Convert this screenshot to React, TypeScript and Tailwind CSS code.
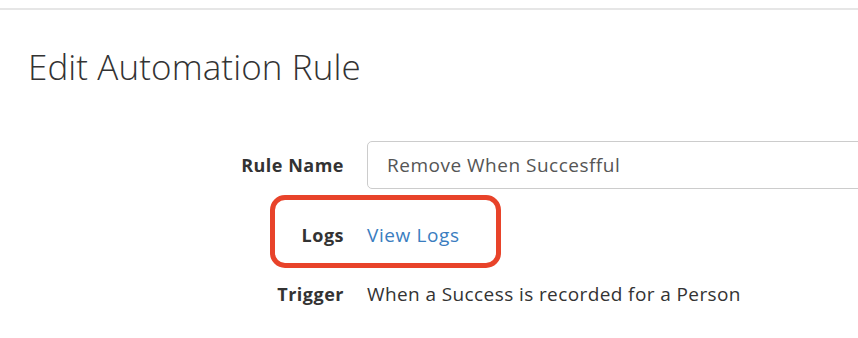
import React from 'react';

const labelCls = 'w-[344px] shrink-0 text-right font-bold text-[18px] tracking-[0.5px] text-[#333]';

export default function App() {
  return (
    <div className="w-[858px] h-[338px] overflow-hidden bg-white font-['Open_Sans',sans-serif] text-[#333]">
      <div className="h-2" />
      <div className="border-t-2 border-[#e6e6e6]" />
      <h1 className="pl-[28px] pt-[38px] text-[35px] font-light leading-[38px] text-[#333] tracking-[0.1px]">
        Edit Automation Rule
      </h1>

      <div className="mt-[55px] flex flex-col">
        <div className="flex items-center gap-[23px]">
          <div className={labelCls}>Rule Name</div>
          <div className="h-[48px] flex-1 -mr-4 flex items-center rounded-[5px] border border-[#cccccc] pl-[19px] text-[19px] tracking-[0.5px] text-[#555]">
            Remove When Succesfful
          </div>
        </div>

        <div className="mt-[6px] flex items-center">
          <div className="w-[270px] shrink-0" />
          <div className="h-[73px] w-[231px] flex items-center pt-[7px] rounded-[15px] border-[5px] border-[#e8432a]">
            <div className="w-[69px] shrink-0 text-right font-bold text-[18px] tracking-[0.5px] text-[#333]">Logs</div>
            <a className="ml-[23px] whitespace-nowrap text-[19px] tracking-[0.6px] text-[#3a7dbf]" href="#">View Logs</a>
          </div>
        </div>

        <div className="mt-[12px] flex items-center gap-[23px]">
          <div className={labelCls}>Trigger</div>
          <div className="text-[19px] tracking-[0.4px] text-[#333]">When a Success is recorded for a Person</div>
        </div>
      </div>
    </div>
  );
}
